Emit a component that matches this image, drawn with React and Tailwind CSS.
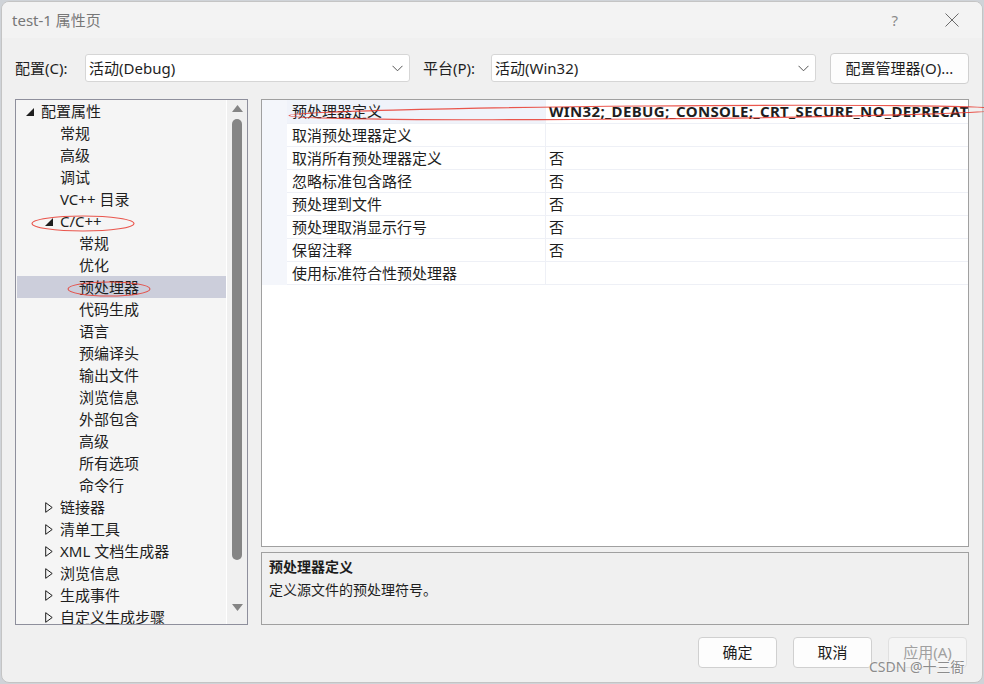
import React from "react";

const FONT = { fontFamily: '"Noto Sans", "Noto Sans CJK SC", sans-serif' };

function ExpTri() {
  return (
    <svg width="8" height="8" viewBox="0 0 8 8" className="shrink-0">
      <polygon points="8,0 8,8 0,8" fill="#1e1e1e" />
    </svg>
  );
}
function ColTri() {
  return (
    <svg width="8" height="11" viewBox="0 0 8 11" className="shrink-0">
      <polygon points="0.7,0.7 7.2,5.5 0.7,10.3" fill="none" stroke="#1e1e1e" strokeWidth="1" />
    </svg>
  );
}
function Chevron() {
  return (
    <svg width="11" height="7" viewBox="0 0 11 7">
      <polyline points="0.5,0.8 5.5,5.8 10.5,0.8" fill="none" stroke="#555" strokeWidth="1" />
    </svg>
  );
}

const tree = [
  { t: "配置属性", lvl: 0, tri: "exp" },
  { t: "常规", lvl: 1 },
  { t: "高级", lvl: 1 },
  { t: "调试", lvl: 1 },
  { t: "VC++ 目录", lvl: 1 },
  { t: "C/C++", lvl: 1, tri: "exp" },
  { t: "常规", lvl: 2 },
  { t: "优化", lvl: 2 },
  { t: "预处理器", lvl: 2, sel: true },
  { t: "代码生成", lvl: 2 },
  { t: "语言", lvl: 2 },
  { t: "预编译头", lvl: 2 },
  { t: "输出文件", lvl: 2 },
  { t: "浏览信息", lvl: 2 },
  { t: "外部包含", lvl: 2 },
  { t: "高级", lvl: 2 },
  { t: "所有选项", lvl: 2 },
  { t: "命令行", lvl: 2 },
  { t: "链接器", lvl: 1, tri: "col" },
  { t: "清单工具", lvl: 1, tri: "col" },
  { t: "XML 文档生成器", lvl: 1, tri: "col" },
  { t: "浏览信息", lvl: 1, tri: "col" },
  { t: "生成事件", lvl: 1, tri: "col" },
  { t: "自定义生成步骤", lvl: 1, tri: "col" },
];

const props = [
  { k: "预处理器定义", v: "WIN32;_DEBUG;_CONSOLE;_CRT_SECURE_NO_DEPRECATE;%(PreprocessorDefinitions)", bold: true, sel: true },
  { k: "取消预处理器定义", v: "" },
  { k: "取消所有预处理器定义", v: "否" },
  { k: "忽略标准包含路径", v: "否" },
  { k: "预处理到文件", v: "否" },
  { k: "预处理取消显示行号", v: "否" },
  { k: "保留注释", v: "否" },
  { k: "使用标准符合性预处理器", v: "" },
];

function TreeRow({ item }) {
  const textLeft = item.lvl === 0 ? 24 : item.lvl === 1 ? 43 : 62;
  return (
    <div
      className={`relative h-[22px] flex items-center shrink-0 ${item.sel ? "bg-[#cccedb]" : ""}`}
    >
      {item.tri && (
        <div
          className={`absolute flex items-center ${item.lvl === 0 ? "left-[9px]" : "left-[28px]"} ${item.tri === "exp" ? "top-[8px]" : "top-[6px]"}`}
        >
          {item.tri === "exp" ? <ExpTri /> : <ColTri />}
        </div>
      )}
      <span
        className={`text-[15px] text-[#1e1e1e] whitespace-nowrap ${textLeft === 24 ? "pl-[24px]" : textLeft === 43 ? "pl-[43px]" : "pl-[62px]"}`}
      >
        {item.t}
      </span>
    </div>
  );
}

export default function App() {
  return (
    <div className="w-[984px] h-[684px] bg-[#cfd3d8] p-px overflow-hidden relative" style={FONT}>
      <div className="w-full h-full rounded-[8px] border border-[#c4c4c4] bg-[#f0f0f0] flex flex-col overflow-hidden">
        {/* Title bar */}
        <div className="h-[36px] shrink-0 flex items-center bg-[#f3f3f3] pl-[10px] pr-[20px]">
          <span className="text-[15px] text-[#777777] leading-none">test-1 属性页</span>
          <div className="flex-1" />
          <span className="text-[15px] text-[#8a8a8a] mr-[47px]">?</span>
          <svg width="14" height="14" viewBox="0 0 14 14" className="mr-[3px]">
            <line x1="0.5" y1="0.5" x2="13.5" y2="13.5" stroke="#6b6b6b" strokeWidth="1" />
            <line x1="13.5" y1="0.5" x2="0.5" y2="13.5" stroke="#6b6b6b" strokeWidth="1" />
          </svg>
        </div>

        {/* Config row */}
        <div className="mt-[15px] h-[30px] shrink-0 flex items-center pl-[13px]">
          <span className="w-[70px] text-[15px] text-[#1e1e1e]">配置(C):</span>
          <div className="w-[325px] h-[28px] bg-white border border-[#d6d6d6] rounded-[3px] flex items-center pl-[3px] pr-[6px]">
            <span className="text-[15px] text-[#1e1e1e] flex-1">活动(Debug)</span>
            <Chevron />
          </div>
          <span className="ml-[13px] w-[68px] text-[15px] text-[#1e1e1e]">平台(P):</span>
          <div className="w-[325px] h-[28px] bg-white border border-[#d6d6d6] rounded-[3px] flex items-center pl-[3px] pr-[6px]">
            <span className="text-[15px] text-[#1e1e1e] flex-1">活动(Win32)</span>
            <Chevron />
          </div>
          <div className="ml-[14px] w-[139px] h-[31px] bg-[#fdfdfd] border border-[#d0d0d0] rounded-[4px] flex items-center justify-center">
            <span className="text-[15px] text-[#1e1e1e]">配置管理器(O)...</span>
          </div>
        </div>

        {/* Body */}
        <div className="mt-[16px] flex pl-[13px] h-[526px] shrink-0">
          {/* Tree */}
          <div className="w-[233px] h-full border border-[#8e8f9c] bg-[#f5f5f5] flex">
            <div className="flex-1 flex flex-col overflow-hidden pl-px">
              {tree.map((it, i) => (
                <TreeRow key={i} item={it} />
              ))}
            </div>
            <div className="w-[21px] h-full border-l border-white bg-[#f0f0f0] flex flex-col items-center relative">
              <svg width="11" height="7" viewBox="0 0 11 7" className="mt-[5px]">
                <polygon points="5.5,0 11,7 0,7" fill="#858585" />
              </svg>
              <div className="mt-[7px] w-[10px] h-[441px] rounded-[5px] bg-[#858585]" />
              <svg width="11" height="7" viewBox="0 0 11 7" className="mt-[44px]">
                <polygon points="0,0 11,0 5.5,7" fill="#858585" />
              </svg>
            </div>
          </div>

          {/* Right column */}
          <div className="ml-[13px] w-[708px] h-full flex flex-col">
            <div className="h-[448px] shrink-0 border border-[#a0a0a0] bg-white flex flex-col overflow-hidden">
              {props.map((p, i) => (
                <div key={i} className={`${i === 0 ? "h-[24px]" : "h-[23px]"} shrink-0 flex`}>
                  <div className="w-[25px] bg-[#f4f6fb]" />
                  <div
                    className={`w-[259px] border-b border-[#eef0f6] border-r flex items-center pl-[5px] ${p.sel ? "bg-[#f0f3fa]" : "bg-white"}`}
                  >
                    <span className="text-[15px] text-[#1e1e1e] whitespace-nowrap">{p.k}</span>
                  </div>
                  <div className="flex-1 min-w-0 border-b border-[#eef0f6] flex items-center pl-[3px] overflow-hidden">
                    <span
                      className={`text-[15px] text-[#1e1e1e] whitespace-nowrap ${p.bold ? "font-bold tracking-[0.35px]" : ""}`}
                    >
                      {p.v}
                    </span>
                  </div>
                </div>
              ))}
            </div>
            <div className="mt-[5px] h-[73px] shrink-0 border border-[#a0a0a0] bg-[#f0f0f0] flex flex-col pl-[7px] pt-[3px]">
              <span className="text-[14px] font-bold text-[#1e1e1e] h-[22px] leading-[22px]">预处理器定义</span>
              <span className="text-[14px] text-[#1e1e1e] h-[24px] leading-[24px]">定义源文件的预处理符号。</span>
            </div>
          </div>
        </div>

        {/* Buttons */}
        <div className="mt-[12px] flex justify-end pr-[15px] gap-[16px]">
          <div className="w-[79px] h-[31px] bg-[#fdfdfd] border border-[#d0d0d0] rounded-[4px] flex items-center justify-center">
            <span className="text-[15px] text-[#1e1e1e]">确定</span>
          </div>
          <div className="w-[79px] h-[31px] bg-[#fdfdfd] border border-[#d0d0d0] rounded-[4px] flex items-center justify-center">
            <span className="text-[15px] text-[#1e1e1e]">取消</span>
          </div>
          <div className="w-[79px] h-[31px] bg-[#f5f5f5] border border-[#e0e0e0] rounded-[4px] flex items-center justify-center">
            <span className="text-[15px] text-[#a0a0a0]">应用(A)</span>
          </div>
        </div>
      </div>

      {/* Watermark */}
      <div className="absolute left-[869px] top-[656px] text-[14px] text-[#8c8c8c] whitespace-nowrap [text-shadow:0_0_2px_#ffffff]">
        CSDN @十三衙
      </div>

      {/* Red annotation ellipses */}
      <svg className="absolute left-0 top-0 pointer-events-none" width="984" height="684" viewBox="0 0 984 684">
        <ellipse cx="645" cy="112.5" rx="356" ry="6.5" transform="rotate(-0.5 645 112.5)" fill="none" stroke="#e8392f" strokeWidth="1.2" opacity="0.85" />
        <ellipse cx="83" cy="223.5" rx="51" ry="7.5" fill="none" stroke="#e8392f" strokeWidth="1.1" opacity="0.85" />
        <ellipse cx="109" cy="289" rx="41" ry="7" fill="none" stroke="#e8392f" strokeWidth="1.1" opacity="0.85" />
      </svg>
    </div>
  );
}
